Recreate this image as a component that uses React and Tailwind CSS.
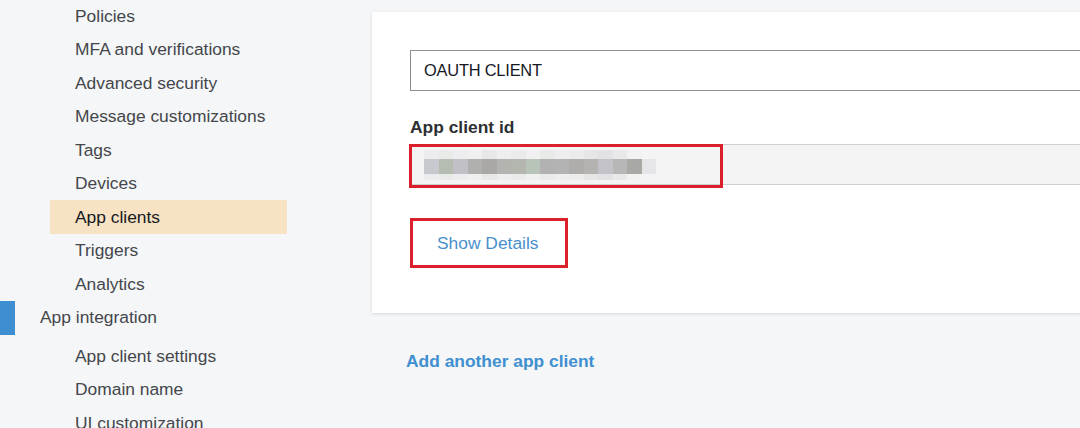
import React from 'react';

const groupOne = [
  'Policies',
  'MFA and verifications',
  'Advanced security',
  'Message customizations',
  'Tags',
  'Devices',
  'App clients',
  'Triggers',
  'Analytics',
];

const groupTwo = ['App client settings', 'Domain name', 'UI customization'];

// pixelated (blurred) client id blocks
const midRow = [
  '#c8c9ce', '#b5bcb2', '#c0c0c6', '#b0b0ae', '#a9a8a6', '#b3b3b0', '#b4b6b0',
  '#b8c4b8', '#b1b2b1', '#b2b3b2', '#aeadab', '#b4b3b1', '#c2c2c8', '#b6b7b6',
  '#a8a8a5', '#e6e6e8',
];
const edgeRow = [
  '#ececee', '#e9ebe8', '#ededef', '#f0f0f0', '#e8e8e8', '#eeeeee', '#ebebeb',
  '#f0f0f0', '#e9ebe9', '#eeeeee', '#ececec', '#e6e6e6', '#e2e2e4', '#e9e9e9',
  '#f2f2f2', '#f4f4f4',
];

function NavItem({ label, active }) {
  return (
    <div
      className={`h-[33.5px] flex items-center ml-[50px] w-[237px] pl-[25px] ${
        active ? 'bg-[#f7e3c3] text-[#16191f]' : 'text-[#44464b]'
      }`}
    >
      {label}
    </div>
  );
}

export default function App() {
  return (
    <div
      className="flex h-[428px] w-[1080px] overflow-hidden bg-[#f4f6f7] text-[17.4px]"
      style={{ fontFamily: '"Liberation Sans", Arial, sans-serif' }}
    >
      {/* Sidebar */}
      <div className="w-[372px] shrink-0 -mt-[0.75px]">
        {groupOne.map((l) => (
          <NavItem key={l} label={l} active={l === 'App clients'} />
        ))}
        <div className="h-[33.5px] flex items-center relative">
          <div className="w-[15px] h-[34px] bg-[#3d8fd1]" />
          <span className="ml-[25px] text-[#44464b]">App integration</span>
        </div>
        <div className="mt-[5px]">
          {groupTwo.map((l) => (
            <NavItem key={l} label={l} />
          ))}
        </div>
      </div>

      {/* Main */}
      <div className="flex-1 flex flex-col">
        <div className="mt-[12px] w-[760px] h-[301px] bg-white shadow-[0_1px_3px_rgba(0,0,0,0.13)] pl-[38px] pt-[38px]">
          <div className="h-[41px] border border-[#8e8e8e] flex items-center pl-[13px] text-[16.4px] tracking-[-0.2px] text-[#16191f]">
            OAUTH CLIENT
          </div>
          <div className="mt-[26px] font-bold text-[#2d2f33] leading-[20px]">App client id</div>
          <div className="relative mt-[7px] h-[41px] bg-[#f4f4f4] border-y border-[#cfcfcf]">
            <div className="absolute left-[14px] top-[5px] flex flex-col">
              <div className="flex">
                {edgeRow.map((c, i) => (
                  <div key={i} className="w-[14.5px] h-[9px]" style={{ backgroundColor: c }} />
                ))}
              </div>
              <div className="flex">
                {midRow.map((c, i) => (
                  <div key={i} className="w-[14.5px] h-[15px]" style={{ backgroundColor: c }} />
                ))}
              </div>
              <div className="flex">
                {edgeRow.map((c, i) => (
                  <div key={i} className="w-[14.5px] h-[6px]" style={{ backgroundColor: c }} />
                ))}
              </div>
            </div>
            <div className="absolute -left-[1px] -top-[1px] w-[314px] h-[44px] border-[3px] border-[#d9202b]" />
          </div>
          <div className="mt-[33px] w-[158px] h-[50px] border-[3px] border-[#d9202b] flex items-center pl-[24px] text-[#4a8fcb]">
            Show Details
          </div>
        </div>
        <div className="mt-[35px] ml-[34px] font-bold text-[#3f8fd1]">Add another app client</div>
      </div>
    </div>
  );
}
